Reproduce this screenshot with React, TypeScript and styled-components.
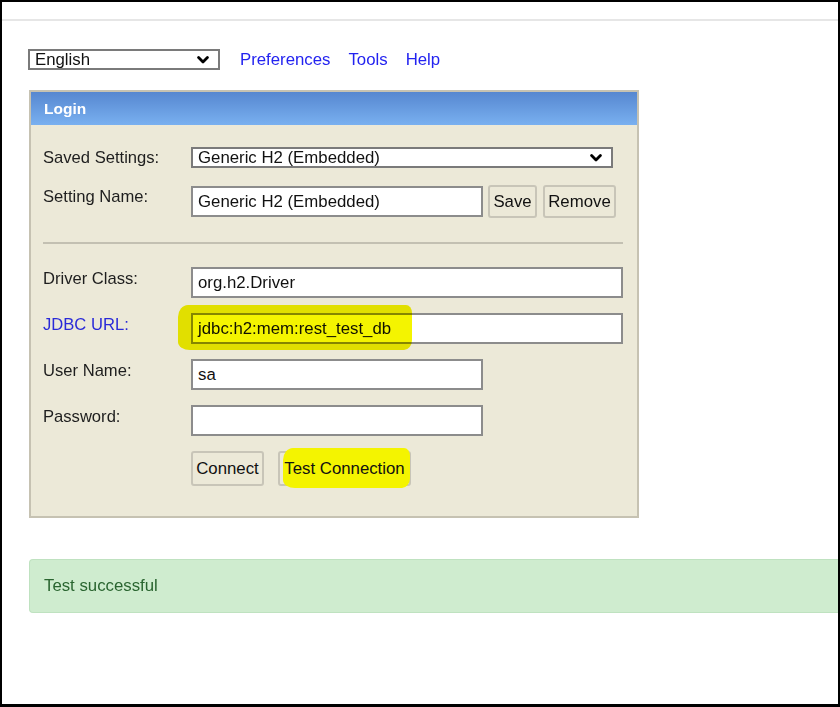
import React from "react";
import styled, { createGlobalStyle } from "styled-components";

const GlobalStyle = createGlobalStyle`
  html, body { margin: 0; padding: 0; background: #fff; }
  body { font-family: "Liberation Sans", Arial, sans-serif; }
  * { box-sizing: border-box; }
`;

const Frame = styled.div`
  width: 840px;
  height: 707px;
  border: 2px solid #000;
  border-bottom-width: 3px;
  overflow: hidden;
  display: flex;
  flex-direction: column;
  background: #fff;
`;

const TopStrip = styled.div`
  height: 19px;
  flex: none;
  border-bottom: 2px solid #e6e6e6;
`;

const Content = styled.div`
  padding: 28px 0 0 26px;
  display: flex;
  flex-direction: column;
`;

const Toolbar = styled.div`
  display: flex;
  align-items: center;
  height: 21px;
`;

const SelectBox = styled.div<{ $w: number; $h: number; $bw: number; $pad: number }>`
  width: ${(p) => p.$w}px;
  height: ${(p) => p.$h}px;
  border: ${(p) => p.$bw}px solid #7a7a7a;
  background: #fff;
  display: flex;
  align-items: center;
  justify-content: space-between;
  padding: 0 ${(p) => p.$pad}px 0 5px;
  font-size: 16.8px;
  color: #111;
`;

const Links = styled.nav`
  display: flex;
  gap: 18px;
  margin-left: 20px;
`;

const Link = styled.a`
  color: #2323f0;
  font-size: 16.8px;
  text-decoration: none;
`;

const Panel = styled.section`
  margin: 20px 0 0 1px;
  width: 610px;
  border: 2px solid #c6c2b2;
  background: #ece9d8;
`;

const PanelHeader = styled.div`
  height: 33px;
  background: linear-gradient(#5687d0, #79b0f0);
  color: #fff;
  font-size: 15.5px;
  font-weight: bold;
  display: flex;
  align-items: center;
  padding-left: 13px;
`;

const PanelBody = styled.div`
  padding: 22px 0 30px 12px;
  display: flex;
  flex-direction: column;
`;

const Row = styled.div<{ $mt: number; $center?: boolean }>`
  display: flex;
  align-items: ${(p) => (p.$center ? "center" : "flex-start")};
  margin-top: ${(p) => p.$mt}px;
`;

const Label = styled.label<{ $blue?: boolean; $pt?: number }>`
  width: 148px;
  flex: none;
  font-size: 16.6px;
  color: ${(p) => (p.$blue ? "#2a2ad8" : "#1e1e1e")};
  padding-top: ${(p) => p.$pt ?? 0}px;
`;

const Field = styled.div<{ $w: number }>`
  position: relative;
  width: ${(p) => p.$w}px;
  height: 31px;
  border: 2px solid #8c8c8c;
  background: #fff;
  display: flex;
  align-items: center;
  padding-left: 5px;
  font-size: 16.8px;
  color: #111;
`;

const Btn = styled.button<{ $w: number; $h: number }>`
  position: relative;
  width: ${(p) => p.$w}px;
  height: ${(p) => p.$h}px;
  background: #ece9d8;
  border: 2px solid #c8c5b8;
  border-radius: 3px;
  font-family: "Liberation Sans", Arial, sans-serif;
  font-size: 16.8px;
  color: #111;
  padding: 0;
`;

const BtnText = styled.span`
  position: relative;
`;

const BtnGroup = styled.div<{ $gap: number; $ml?: number }>`
  display: flex;
  gap: ${(p) => p.$gap}px;
  margin-left: ${(p) => p.$ml ?? 0}px;
`;

const Divider = styled.hr`
  margin: 24px 0 0 0;
  width: 580px;
  height: 2px;
  border: none;
  background: #c3c0b2;
`;

const Marker = styled.span<{ $l: number; $t: number; $w: number; $h: number; $blend?: boolean }>`
  position: absolute;
  left: ${(p) => p.$l}px;
  top: ${(p) => p.$t}px;
  width: ${(p) => p.$w}px;
  height: ${(p) => p.$h}px;
  background: #f4f400;
  mix-blend-mode: ${(p) => (p.$blend ? "multiply" : "normal")};
  border-radius: 10px 6px 8px 12px / 12px 8px 10px 8px;
  pointer-events: none;
`;

const Alert = styled.div`
  margin: 41px 0 0 1px;
  height: 54px;
  background: #cfeccf;
  border: 1px solid #bfe2c0;
  border-right: none;
  border-radius: 4px 0 0 4px;
  display: flex;
  align-items: center;
  padding-left: 14px;
  font-size: 16.8px;
  color: #2a6530;
`;

const Chevron = () => (
  <svg width={12} height={8} viewBox="0 0 12 8" fill="none">
    <path d="M1.6 1.6 L6 6 L10.4 1.6" stroke="#000" strokeWidth="2.8" strokeLinecap="round" strokeLinejoin="round" />
  </svg>
);

export default function App() {
  return (
    <>
      <GlobalStyle />
      <Frame>
        <TopStrip />
        <Content>
          <Toolbar>
            <SelectBox $w={192} $h={21} $bw={2} $pad={9}>
              <span>English</span>
              <Chevron />
            </SelectBox>
            <Links>
              <Link href="#">Preferences</Link>
              <Link href="#">Tools</Link>
              <Link href="#">Help</Link>
            </Links>
          </Toolbar>

          <Panel>
            <PanelHeader>Login</PanelHeader>
            <PanelBody>
              <Row $mt={0} $center>
                <Label>Saved Settings:</Label>
                <SelectBox $w={422} $h={21} $bw={2} $pad={9}>
                  <span>Generic H2 (Embedded)</span>
                  <Chevron />
                </SelectBox>
              </Row>
              <Row $mt={17}>
                <Label $pt={2}>Setting Name:</Label>
                <Field $w={292} style={{ marginTop: 1 }}>Generic H2 (Embedded)</Field>
                <BtnGroup $gap={6} $ml={5}>
                  <Btn $w={49} $h={33}>Save</Btn>
                  <Btn $w={73} $h={33}>Remove</Btn>
                </BtnGroup>
              </Row>
              <Divider />
              <Row $mt={23}>
                <Label $pt={2}>Driver Class:</Label>
                <Field $w={432}>org.h2.Driver</Field>
              </Row>
              <Row $mt={15}>
                <Label $blue $pt={2}>JDBC URL:</Label>
                <Field $w={432}>
                  jdbc:h2:mem:rest_test_db
                  <Marker $blend $l={-15} $t={-10} $w={234} $h={45} />
                </Field>
              </Row>
              <Row $mt={15}>
                <Label $pt={2}>User Name:</Label>
                <Field $w={292}>sa</Field>
              </Row>
              <Row $mt={15}>
                <Label $pt={2}>Password:</Label>
                <Field $w={292} />
              </Row>
              <Row $mt={15}>
                <Label />
                <BtnGroup $gap={14}>
                  <Btn $w={73} $h={35}>Connect</Btn>
                  <Btn $w={133} $h={35}>
                    <Marker $l={3} $t={-5} $w={127} $h={40} />
                    <BtnText>Test Connection</BtnText>
                  </Btn>
                </BtnGroup>
              </Row>
            </PanelBody>
          </Panel>

          <Alert>Test successful</Alert>
        </Content>
      </Frame>
    </>
  );
}
